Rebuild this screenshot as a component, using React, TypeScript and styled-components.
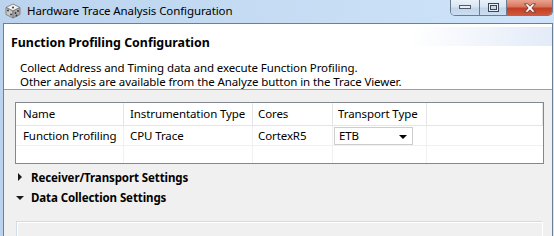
import React from 'react';
import styled, { createGlobalStyle } from 'styled-components';

const GlobalStyle = createGlobalStyle`
  html, body { margin: 0; padding: 0; }
  body {
    width: 554px;
    height: 236px;
    overflow: hidden;
    font-family: "Noto Sans", "Open Sans", sans-serif;
    font-size: 11.5px;
    letter-spacing: -0.1px;
    color: #000;
  }
`;

const Window = styled.div`
  width: 554px;
  height: 236px;
  display: flex;
  flex-direction: column;
  overflow: hidden;
  background: linear-gradient(90deg, #bbd3ed 0%, #c4dbf3 45%, #cfe4f9 100%);
`;

const TitleBar = styled.div`
  height: 23px;
  flex-shrink: 0;
  display: flex;
  align-items: flex-start;
`;

const AppIcon = styled.svg`
  width: 16px;
  height: 16px;
  margin: 3px 0 0 5px;
  flex-shrink: 0;
`;

const TitleText = styled.div`
  margin-left: 6px;
  line-height: 22px;
  white-space: nowrap;
`;

const Spacer = styled.div`
  flex: 1;
`;

const Controls = styled.div`
  display: flex;
  margin-right: 1px;
  height: 16px;
  border: 1px solid #6b7c91;
  border-top: none;
  border-radius: 0 0 5px 5px;
  overflow: hidden;
  box-sizing: border-box;
`;

const CtlButton = styled.div<{ $w: number; $close?: boolean }>`
  width: ${(p) => p.$w}px;
  height: 15px;
  display: flex;
  align-items: center;
  justify-content: center;
  box-sizing: border-box;
  & + & {
    border-left: 1px solid #6b7c91;
  }
  background: ${(p) =>
    p.$close
      ? 'linear-gradient(180deg, #e9a38f 0%, #d9765c 45%, #c23e24 55%, #d0583a 100%)'
      : 'linear-gradient(180deg, #e9f1fa 0%, #d8e5f3 45%, #c2d5ea 55%, #ccdef2 100%)'};
`;

const Client = styled.div`
  flex: 1;
  margin: 0 1px 0 3px;
  border: 1px solid #6f7f92;
  border-bottom: none;
  background: #f0f0f0;
  display: flex;
  flex-direction: column;
  min-height: 0;
`;

const Header = styled.div`
  background-color: #fff;
  background-image: linear-gradient(100deg, rgba(255, 255, 255, 0) 74%, #e3ebf8 100%);
  background-size: 100% 19px;
  background-position: 0 3px;
  background-repeat: no-repeat;
  border-bottom: 1px solid #a0a0a0;
  padding: 11px 0 0 7px;
`;

const HeaderTitle = styled.div`
  font-weight: bold;
  font-size: 12.4px;
  letter-spacing: 0;
  line-height: 16px;
`;

const Description = styled.div`
  margin-top: 10px;
  padding-left: 9px;
  line-height: 14px;
`;

const Body = styled.div`
  flex: 1;
  display: flex;
  flex-direction: column;
  padding: 12px 8px 0 11px;
  min-height: 0;
`;

const Table = styled.div`
  border: 1px solid #828790;
  background: #fff;
  display: grid;
  grid-template-columns: 108px 129px 80px 94px 1fr;
  grid-template-rows: 23px 20px 17px;
`;

const HeadCell = styled.div<{ $pad?: number }>`
  border-right: 1px solid #e5e5e5;
  border-bottom: 1px solid #e5e5e5;
  padding-left: ${(p) => p.$pad ?? 6}px;
  line-height: 22px;
  white-space: nowrap;
  overflow: hidden;
  &:last-child {
    border-right: none;
  }
`;

const Cell = styled.div<{ $pad?: number; $last?: boolean; $bottom?: boolean }>`
  border-right: ${(p) => (p.$last ? 'none' : '1px solid #f0f0f0')};
  border-bottom: ${(p) => (p.$bottom ? 'none' : '1px solid #f0f0f0')};
  padding-left: ${(p) => p.$pad ?? 6}px;
  line-height: 19px;
  white-space: nowrap;
  overflow: hidden;
`;

const Combo = styled.div`
  margin: 1px 0 0 1px;
  width: 79px;
  height: 18px;
  box-sizing: border-box;
  border: 1px solid #cdcdcd;
  background: #fff;
  display: flex;
  align-items: center;
  padding: 0 5px 0 4px;
  line-height: 16px;
`;

const ComboText = styled.span`
  flex: 1;
`;

const DownArrow = styled.span`
  width: 0;
  height: 0;
  border-left: 4px solid transparent;
  border-right: 4px solid transparent;
  border-top: 4px solid #000;
  margin-top: 2px;
`;

const Sections = styled.div`
  margin-top: 3px;
  display: flex;
  flex-direction: column;
`;

const SectionRow = styled.div`
  height: 20px;
  display: flex;
  align-items: center;
  font-weight: bold;
  white-space: nowrap;
`;

const Twisty = styled.span`
  width: 9px;
  margin-right: 7px;
  display: flex;
  align-items: center;
  justify-content: center;
`;

const TriRight = styled.span`
  width: 0;
  height: 0;
  border-top: 4px solid transparent;
  border-bottom: 4px solid transparent;
  border-left: 4px solid #1a1a1a;
`;

const TriDown = styled.span`
  width: 0;
  height: 0;
  border-left: 4px solid transparent;
  border-right: 4px solid transparent;
  border-top: 4px solid #1a1a1a;
  margin-top: 1px;
`;

const Panel = styled.div`
  flex: 1;
  margin: 14px 1px 0 1px;
  border-top: 1px solid #d2dce4;
  border-left: 1px solid #d2dce4;
  border-right: 1px solid #fff;
  box-shadow: inset 1px 1px 0 #fff;
`;

const columns = [
  { label: 'Name', pad: 7 },
  { label: 'Instrumentation Type', pad: 6 },
  { label: 'Cores', pad: 5 },
  { label: 'Transport Type', pad: 5 },
  { label: '', pad: 5 },
];

export default function App() {
  return (
    <>
      <GlobalStyle />
      <Window>
        <TitleBar>
          <AppIcon viewBox="0 0 16 16">
            <polygon points="8,1 15,4.5 8,8 1,4.5" fill="#f2f2f2" stroke="#6f6f6f" strokeWidth="0.8" />
            <polygon points="1,4.5 8,8 8,15 1,11.5" fill="#c9c9c9" stroke="#6f6f6f" strokeWidth="0.8" />
            <polygon points="8,8 15,4.5 15,11.5 8,15" fill="#a9a9a9" stroke="#6f6f6f" strokeWidth="0.8" />
            <circle cx="8" cy="4.5" r="1" fill="#333" />
            <circle cx="3" cy="7.5" r="0.9" fill="#333" />
            <circle cx="6" cy="11.5" r="0.9" fill="#333" />
            <circle cx="10.5" cy="10" r="0.9" fill="#333" />
            <circle cx="13" cy="8" r="0.9" fill="#333" />
            <circle cx="11.5" cy="12.5" r="0.9" fill="#333" />
          </AppIcon>
          <TitleText>Hardware Trace Analysis Configuration</TitleText>
          <Spacer />
          <Controls>
            <CtlButton $w={28}>
              <svg width="12" height="5" viewBox="0 0 12 5">
                <rect x="0.5" y="0.5" width="11" height="3" fill="#e8eef5" stroke="#4c5a6b" />
              </svg>
            </CtlButton>
            <CtlButton $w={27}>
              <svg width="11" height="9" viewBox="0 0 11 9">
                <rect x="0.5" y="0.5" width="10" height="8" fill="#e8eef5" stroke="#3a4757" />
                <rect x="2.5" y="2.5" width="6" height="4" fill="#c8d6e6" stroke="#3a4757" />
              </svg>
            </CtlButton>
            <CtlButton $w={46} $close>
              <svg width="14" height="10" viewBox="0 0 14 10">
                <path
                  d="M1.5 0.8 L4.5 0.8 L7 3.2 L9.5 0.8 L12.5 0.8 L8.8 5 L12.5 9.2 L9.5 9.2 L7 6.8 L4.5 9.2 L1.5 9.2 L5.2 5 Z"
                  fill="#fff"
                  stroke="#5a2a22"
                  strokeWidth="0.8"
                  strokeLinejoin="round"
                />
              </svg>
            </CtlButton>
          </Controls>
        </TitleBar>
        <Client>
          <Header>
            <HeaderTitle>Function Profiling Configuration</HeaderTitle>
            <Description>
              Collect Address and Timing data and execute Function Profiling.
              <br />
              Other analysis are available from the Analyze button in the Trace Viewer.
            </Description>
          </Header>
          <Body>
            <Table>
              {columns.map((c, i) => (
                <HeadCell key={i} $pad={c.pad}>
                  {c.label}
                </HeadCell>
              ))}
              <Cell $pad={7}>Function Profiling</Cell>
              <Cell>CPU Trace</Cell>
              <Cell $pad={5}>CortexR5</Cell>
              <Cell $pad={0}>
                <Combo>
                  <ComboText>ETB</ComboText>
                  <DownArrow />
                </Combo>
              </Cell>
              <Cell $last />
              <Cell $bottom />
              <Cell $bottom />
              <Cell $bottom />
              <Cell $bottom />
              <Cell $bottom $last />
            </Table>
            <Sections>
              <SectionRow>
                <Twisty>
                  <TriRight />
                </Twisty>
                Receiver/Transport Settings
              </SectionRow>
              <SectionRow>
                <Twisty>
                  <TriDown />
                </Twisty>
                Data Collection Settings
              </SectionRow>
            </Sections>
            <Panel />
          </Body>
        </Client>
      </Window>
    </>
  );
}
